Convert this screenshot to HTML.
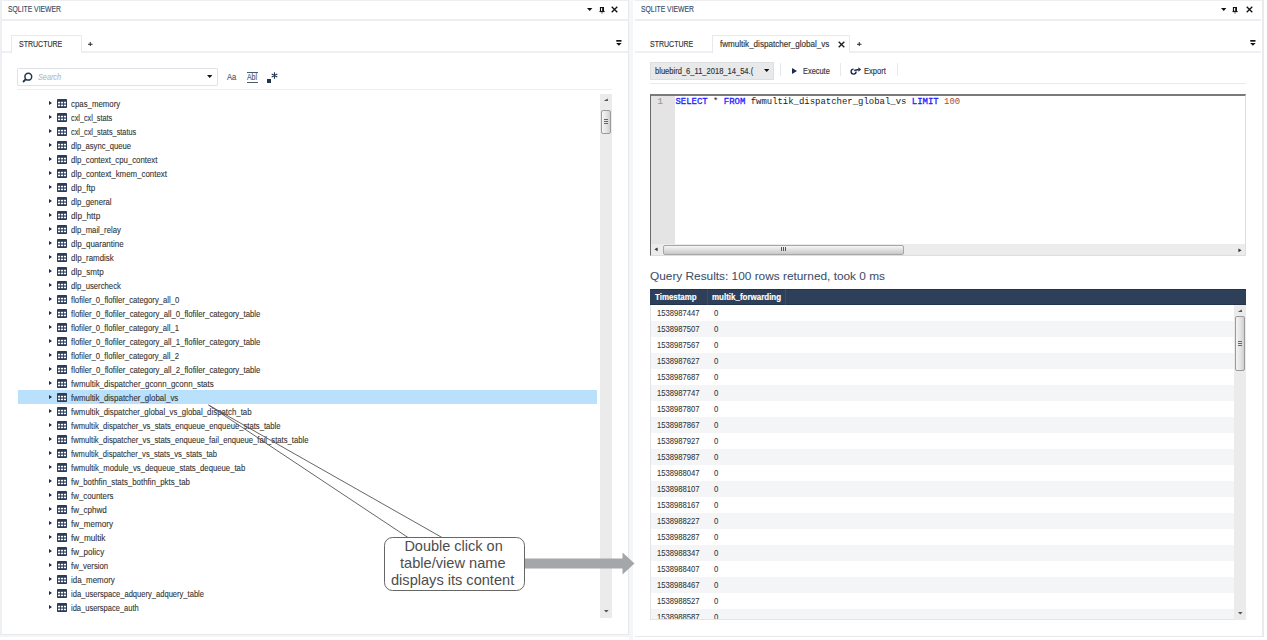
<!DOCTYPE html>
<html><head><meta charset="utf-8"><style>
*{margin:0;padding:0;box-sizing:border-box}
html,body{width:1267px;height:640px;overflow:hidden;background:#fff;font-family:"Liberation Sans",sans-serif;position:relative}
.abs{position:absolute}
.t{position:absolute;white-space:pre;transform-origin:0 50%;-webkit-text-stroke-width:0.15px}
#lp{position:absolute;left:0;top:0;width:629px;height:635px;border:1px solid #e6e9ec;border-left:2px solid #edf0f2;border-top-color:#eceef0}
#split{position:absolute;left:629px;top:0;width:4px;height:640px;background:#f5f6f7}
#bstrip{position:absolute;left:0;top:635px;width:633px;height:2px;background:#f5f5f6}
#rp{position:absolute;left:635px;top:0;width:629px;height:637px;border-top:1px solid #eceef0;border-right:2px solid #e8eaed;border-bottom:1px solid #e6e9ec}
.tabline{position:absolute;height:2px;top:51px;background:#edeff2}
.tab{position:absolute;top:35px;height:18px;border:1px solid #e6e9ed;border-bottom:none;background:#fff}
.tr{position:absolute;left:18px;width:579px;height:14px}
.tr.sel{background:#bae1fb}
.tri{position:absolute;left:30.5px;top:4.6px;width:0;height:0;border-left:3.1px solid #1b2a4a;border-top:2.8px solid transparent;border-bottom:2.8px solid transparent}
.ti{position:absolute;left:39px;top:3px}
.rr{position:absolute;left:651px;width:583px;height:16px;background:#fff}
.rr.odd{background:#f4f5f7}
.dn{position:absolute;width:0;height:0;border-top:3px solid #111;border-left:2.6px solid transparent;border-right:2.6px solid transparent}
</style></head><body>
<div id="lp"></div>
<div id="split"></div>
<div id="bstrip"></div>
<div id="rp"></div>

<!-- LEFT PANEL -->
<div class="abs" style="left:2px;top:19px;width:626px;height:2px;background:#eceef1"></div>
<div class="t" style="left:7.80px;top:4.78px;font:normal normal 9.2px/1 'Liberation Sans';color:#3c4c66;transform:scaleX(0.7414);">SQLITE VIEWER</div>
<svg class="abs" style="left:587.0px;top:7.8px" width="6" height="4" viewBox="0 0 6 4"><path d="M0 0H5.4L2.7 3.1Z" fill="#111"/></svg>
<svg class="abs" style="left:599px;top:6px" width="7" height="9" viewBox="0 0 7 9"><rect x="0.9" y="1" width="4.1" height="4.6" fill="#111"/><rect x="2" y="2.1" width="1.2" height="2.7" fill="#fff"/><rect x="0.5" y="5.1" width="5.2" height="1" fill="#111"/><rect x="2.3" y="6" width="1.4" height="1.7" fill="#888"/></svg>
<svg class="abs" style="left:611.3px;top:6.1px" width="7" height="7" viewBox="0 0 7 7"><path d="M0.7 0.7L6.3 6.3M6.3 0.7L0.7 6.3" stroke="#111" stroke-width="1.3"/></svg>
<div class="tabline" style="left:2px;width:10px"></div>
<div class="tab" style="left:11px;width:71px"></div>
<div class="tabline" style="left:81px;width:547px"></div>
<div class="t" style="left:18.70px;top:39.89px;font:normal normal 8.6px/1 'Liberation Sans';color:#333;transform:scaleX(0.8151);">STRUCTURE</div>
<svg class="abs" style="left:88.35px;top:41.95px" width="4.5" height="4.5" viewBox="0 0 4.5 4.5"><path d="M2.25 0V4.5M0 2.25H4.5" stroke="#2a2a2a" stroke-width="1"/></svg>
<svg class="abs" style="left:615.5px;top:40px" width="6" height="6" viewBox="0 0 6 6"><rect x="0.25" y="0" width="5.25" height="1.7" fill="#1a1a1a"/><path d="M0.1 2.9H5.6L2.85 5.8Z" fill="#111"/></svg>
<div class="abs" style="left:17px;top:68px;width:201px;height:18px;border:1px solid #dfe2e6;border-radius:1px;background:#fff"></div>
<svg class="abs" style="left:22px;top:72px" width="11" height="11" viewBox="0 0 11 11"><circle cx="6.3" cy="4.7" r="3.4" fill="none" stroke="#23344f" stroke-width="1.5"/><path d="M4 7L1 10" stroke="#23344f" stroke-width="1.8"/></svg>
<div class="t" style="left:38.20px;top:73.19px;font:italic normal 8.6px/1 'Liberation Sans';color:#b9bdc3;transform:scaleX(0.8445);">Search</div>
<svg class="abs" style="left:207.0px;top:75.0px" width="6" height="4" viewBox="0 0 6 4"><path d="M0 0H5.4L2.7 3.1Z" fill="#111"/></svg>
<div class="t" style="left:227.40px;top:73.19px;font:normal normal 8.6px/1 'Liberation Sans';color:#4a5a70;transform:scaleX(0.8844);">Aa</div>
<div class="abs" style="left:247px;top:72px;width:11px;height:1px;background:#4a5a70"></div>
<div class="t" style="left:246.90px;top:73.19px;font:normal normal 8.6px/1 'Liberation Sans';color:#4a5a70;transform:scaleX(0.8050);">Abl</div>
<div class="abs" style="left:247px;top:82px;width:11px;height:1px;background:#4a5a70"></div>
<div class="abs" style="left:267px;top:79px;width:4px;height:4px;background:#23344f"></div>
<svg class="abs" style="left:271px;top:71.5px" width="7" height="7" viewBox="0 0 7 7"><path d="M3.5 0.3V6.7M0.7 1.9L6.3 5.1M0.7 5.1L6.3 1.9" stroke="#23344f" stroke-width="1.1"/></svg>
<div class="abs" style="left:17px;top:89px;width:595px;height:1px;background:#eceef0"></div>
<div class="tr" style="top:96px"><i class="tri"></i><svg class="ti" width="10" height="9" viewBox="0 0 10 9"><rect x="0" y="0" width="10" height="9" rx="0.8" fill="#2b3c5a"/><g fill="#fff"><rect x="1" y="2.8" width="2.1" height="1.4"/><rect x="3.95" y="2.8" width="2.1" height="1.4"/><rect x="6.9" y="2.8" width="2.1" height="1.4"/><rect x="1" y="5.9" width="2.1" height="1.3"/><rect x="3.95" y="5.9" width="2.1" height="1.3"/><rect x="6.9" y="5.9" width="2.1" height="1.3"/></g><g fill="#fff" opacity="0.3"><rect x="1" y="4.2" width="2.1" height="1.7"/><rect x="3.95" y="4.2" width="2.1" height="1.7"/><rect x="6.9" y="4.2" width="2.1" height="1.7"/></g></svg></div><div class="t" style="left:70.60px;top:99.59px;font:normal normal 8.6px/1 'Liberation Sans',sans-serif;color:#333;transform:scaleX(0.9116);-webkit-text-stroke-width:0.1px">cpas_memory</div><div class="tr" style="top:110px"><i class="tri"></i><svg class="ti" width="10" height="9" viewBox="0 0 10 9"><rect x="0" y="0" width="10" height="9" rx="0.8" fill="#2b3c5a"/><g fill="#fff"><rect x="1" y="2.8" width="2.1" height="1.4"/><rect x="3.95" y="2.8" width="2.1" height="1.4"/><rect x="6.9" y="2.8" width="2.1" height="1.4"/><rect x="1" y="5.9" width="2.1" height="1.3"/><rect x="3.95" y="5.9" width="2.1" height="1.3"/><rect x="6.9" y="5.9" width="2.1" height="1.3"/></g><g fill="#fff" opacity="0.3"><rect x="1" y="4.2" width="2.1" height="1.7"/><rect x="3.95" y="4.2" width="2.1" height="1.7"/><rect x="6.9" y="4.2" width="2.1" height="1.7"/></g></svg></div><div class="t" style="left:70.60px;top:113.59px;font:normal normal 8.6px/1 'Liberation Sans',sans-serif;color:#333;transform:scaleX(0.8457);-webkit-text-stroke-width:0.1px">cxl_cxl_stats</div><div class="tr" style="top:124px"><i class="tri"></i><svg class="ti" width="10" height="9" viewBox="0 0 10 9"><rect x="0" y="0" width="10" height="9" rx="0.8" fill="#2b3c5a"/><g fill="#fff"><rect x="1" y="2.8" width="2.1" height="1.4"/><rect x="3.95" y="2.8" width="2.1" height="1.4"/><rect x="6.9" y="2.8" width="2.1" height="1.4"/><rect x="1" y="5.9" width="2.1" height="1.3"/><rect x="3.95" y="5.9" width="2.1" height="1.3"/><rect x="6.9" y="5.9" width="2.1" height="1.3"/></g><g fill="#fff" opacity="0.3"><rect x="1" y="4.2" width="2.1" height="1.7"/><rect x="3.95" y="4.2" width="2.1" height="1.7"/><rect x="6.9" y="4.2" width="2.1" height="1.7"/></g></svg></div><div class="t" style="left:70.60px;top:127.59px;font:normal normal 8.6px/1 'Liberation Sans',sans-serif;color:#333;transform:scaleX(0.8532);-webkit-text-stroke-width:0.1px">cxl_cxl_stats_status</div><div class="tr" style="top:138px"><i class="tri"></i><svg class="ti" width="10" height="9" viewBox="0 0 10 9"><rect x="0" y="0" width="10" height="9" rx="0.8" fill="#2b3c5a"/><g fill="#fff"><rect x="1" y="2.8" width="2.1" height="1.4"/><rect x="3.95" y="2.8" width="2.1" height="1.4"/><rect x="6.9" y="2.8" width="2.1" height="1.4"/><rect x="1" y="5.9" width="2.1" height="1.3"/><rect x="3.95" y="5.9" width="2.1" height="1.3"/><rect x="6.9" y="5.9" width="2.1" height="1.3"/></g><g fill="#fff" opacity="0.3"><rect x="1" y="4.2" width="2.1" height="1.7"/><rect x="3.95" y="4.2" width="2.1" height="1.7"/><rect x="6.9" y="4.2" width="2.1" height="1.7"/></g></svg></div><div class="t" style="left:70.60px;top:141.59px;font:normal normal 8.6px/1 'Liberation Sans',sans-serif;color:#333;transform:scaleX(0.8920);-webkit-text-stroke-width:0.1px">dlp_async_queue</div><div class="tr" style="top:152px"><i class="tri"></i><svg class="ti" width="10" height="9" viewBox="0 0 10 9"><rect x="0" y="0" width="10" height="9" rx="0.8" fill="#2b3c5a"/><g fill="#fff"><rect x="1" y="2.8" width="2.1" height="1.4"/><rect x="3.95" y="2.8" width="2.1" height="1.4"/><rect x="6.9" y="2.8" width="2.1" height="1.4"/><rect x="1" y="5.9" width="2.1" height="1.3"/><rect x="3.95" y="5.9" width="2.1" height="1.3"/><rect x="6.9" y="5.9" width="2.1" height="1.3"/></g><g fill="#fff" opacity="0.3"><rect x="1" y="4.2" width="2.1" height="1.7"/><rect x="3.95" y="4.2" width="2.1" height="1.7"/><rect x="6.9" y="4.2" width="2.1" height="1.7"/></g></svg></div><div class="t" style="left:70.60px;top:155.59px;font:normal normal 8.6px/1 'Liberation Sans',sans-serif;color:#333;transform:scaleX(0.9077);-webkit-text-stroke-width:0.1px">dlp_context_cpu_context</div><div class="tr" style="top:166px"><i class="tri"></i><svg class="ti" width="10" height="9" viewBox="0 0 10 9"><rect x="0" y="0" width="10" height="9" rx="0.8" fill="#2b3c5a"/><g fill="#fff"><rect x="1" y="2.8" width="2.1" height="1.4"/><rect x="3.95" y="2.8" width="2.1" height="1.4"/><rect x="6.9" y="2.8" width="2.1" height="1.4"/><rect x="1" y="5.9" width="2.1" height="1.3"/><rect x="3.95" y="5.9" width="2.1" height="1.3"/><rect x="6.9" y="5.9" width="2.1" height="1.3"/></g><g fill="#fff" opacity="0.3"><rect x="1" y="4.2" width="2.1" height="1.7"/><rect x="3.95" y="4.2" width="2.1" height="1.7"/><rect x="6.9" y="4.2" width="2.1" height="1.7"/></g></svg></div><div class="t" style="left:70.60px;top:169.59px;font:normal normal 8.6px/1 'Liberation Sans',sans-serif;color:#333;transform:scaleX(0.9166);-webkit-text-stroke-width:0.1px">dlp_context_kmem_context</div><div class="tr" style="top:180px"><i class="tri"></i><svg class="ti" width="10" height="9" viewBox="0 0 10 9"><rect x="0" y="0" width="10" height="9" rx="0.8" fill="#2b3c5a"/><g fill="#fff"><rect x="1" y="2.8" width="2.1" height="1.4"/><rect x="3.95" y="2.8" width="2.1" height="1.4"/><rect x="6.9" y="2.8" width="2.1" height="1.4"/><rect x="1" y="5.9" width="2.1" height="1.3"/><rect x="3.95" y="5.9" width="2.1" height="1.3"/><rect x="6.9" y="5.9" width="2.1" height="1.3"/></g><g fill="#fff" opacity="0.3"><rect x="1" y="4.2" width="2.1" height="1.7"/><rect x="3.95" y="4.2" width="2.1" height="1.7"/><rect x="6.9" y="4.2" width="2.1" height="1.7"/></g></svg></div><div class="t" style="left:70.60px;top:183.59px;font:normal normal 8.6px/1 'Liberation Sans',sans-serif;color:#333;transform:scaleX(0.9375);-webkit-text-stroke-width:0.1px">dlp_ftp</div><div class="tr" style="top:194px"><i class="tri"></i><svg class="ti" width="10" height="9" viewBox="0 0 10 9"><rect x="0" y="0" width="10" height="9" rx="0.8" fill="#2b3c5a"/><g fill="#fff"><rect x="1" y="2.8" width="2.1" height="1.4"/><rect x="3.95" y="2.8" width="2.1" height="1.4"/><rect x="6.9" y="2.8" width="2.1" height="1.4"/><rect x="1" y="5.9" width="2.1" height="1.3"/><rect x="3.95" y="5.9" width="2.1" height="1.3"/><rect x="6.9" y="5.9" width="2.1" height="1.3"/></g><g fill="#fff" opacity="0.3"><rect x="1" y="4.2" width="2.1" height="1.7"/><rect x="3.95" y="4.2" width="2.1" height="1.7"/><rect x="6.9" y="4.2" width="2.1" height="1.7"/></g></svg></div><div class="t" style="left:70.60px;top:197.59px;font:normal normal 8.6px/1 'Liberation Sans',sans-serif;color:#333;transform:scaleX(0.9038);-webkit-text-stroke-width:0.1px">dlp_general</div><div class="tr" style="top:208px"><i class="tri"></i><svg class="ti" width="10" height="9" viewBox="0 0 10 9"><rect x="0" y="0" width="10" height="9" rx="0.8" fill="#2b3c5a"/><g fill="#fff"><rect x="1" y="2.8" width="2.1" height="1.4"/><rect x="3.95" y="2.8" width="2.1" height="1.4"/><rect x="6.9" y="2.8" width="2.1" height="1.4"/><rect x="1" y="5.9" width="2.1" height="1.3"/><rect x="3.95" y="5.9" width="2.1" height="1.3"/><rect x="6.9" y="5.9" width="2.1" height="1.3"/></g><g fill="#fff" opacity="0.3"><rect x="1" y="4.2" width="2.1" height="1.7"/><rect x="3.95" y="4.2" width="2.1" height="1.7"/><rect x="6.9" y="4.2" width="2.1" height="1.7"/></g></svg></div><div class="t" style="left:70.60px;top:211.59px;font:normal normal 8.6px/1 'Liberation Sans',sans-serif;color:#333;transform:scaleX(0.9544);-webkit-text-stroke-width:0.1px">dlp_http</div><div class="tr" style="top:222px"><i class="tri"></i><svg class="ti" width="10" height="9" viewBox="0 0 10 9"><rect x="0" y="0" width="10" height="9" rx="0.8" fill="#2b3c5a"/><g fill="#fff"><rect x="1" y="2.8" width="2.1" height="1.4"/><rect x="3.95" y="2.8" width="2.1" height="1.4"/><rect x="6.9" y="2.8" width="2.1" height="1.4"/><rect x="1" y="5.9" width="2.1" height="1.3"/><rect x="3.95" y="5.9" width="2.1" height="1.3"/><rect x="6.9" y="5.9" width="2.1" height="1.3"/></g><g fill="#fff" opacity="0.3"><rect x="1" y="4.2" width="2.1" height="1.7"/><rect x="3.95" y="4.2" width="2.1" height="1.7"/><rect x="6.9" y="4.2" width="2.1" height="1.7"/></g></svg></div><div class="t" style="left:70.60px;top:225.59px;font:normal normal 8.6px/1 'Liberation Sans',sans-serif;color:#333;transform:scaleX(0.9004);-webkit-text-stroke-width:0.1px">dlp_mail_relay</div><div class="tr" style="top:236px"><i class="tri"></i><svg class="ti" width="10" height="9" viewBox="0 0 10 9"><rect x="0" y="0" width="10" height="9" rx="0.8" fill="#2b3c5a"/><g fill="#fff"><rect x="1" y="2.8" width="2.1" height="1.4"/><rect x="3.95" y="2.8" width="2.1" height="1.4"/><rect x="6.9" y="2.8" width="2.1" height="1.4"/><rect x="1" y="5.9" width="2.1" height="1.3"/><rect x="3.95" y="5.9" width="2.1" height="1.3"/><rect x="6.9" y="5.9" width="2.1" height="1.3"/></g><g fill="#fff" opacity="0.3"><rect x="1" y="4.2" width="2.1" height="1.7"/><rect x="3.95" y="4.2" width="2.1" height="1.7"/><rect x="6.9" y="4.2" width="2.1" height="1.7"/></g></svg></div><div class="t" style="left:70.60px;top:239.59px;font:normal normal 8.6px/1 'Liberation Sans',sans-serif;color:#333;transform:scaleX(0.9248);-webkit-text-stroke-width:0.1px">dlp_quarantine</div><div class="tr" style="top:250px"><i class="tri"></i><svg class="ti" width="10" height="9" viewBox="0 0 10 9"><rect x="0" y="0" width="10" height="9" rx="0.8" fill="#2b3c5a"/><g fill="#fff"><rect x="1" y="2.8" width="2.1" height="1.4"/><rect x="3.95" y="2.8" width="2.1" height="1.4"/><rect x="6.9" y="2.8" width="2.1" height="1.4"/><rect x="1" y="5.9" width="2.1" height="1.3"/><rect x="3.95" y="5.9" width="2.1" height="1.3"/><rect x="6.9" y="5.9" width="2.1" height="1.3"/></g><g fill="#fff" opacity="0.3"><rect x="1" y="4.2" width="2.1" height="1.7"/><rect x="3.95" y="4.2" width="2.1" height="1.7"/><rect x="6.9" y="4.2" width="2.1" height="1.7"/></g></svg></div><div class="t" style="left:70.60px;top:253.59px;font:normal normal 8.6px/1 'Liberation Sans',sans-serif;color:#333;transform:scaleX(0.9235);-webkit-text-stroke-width:0.1px">dlp_ramdisk</div><div class="tr" style="top:264px"><i class="tri"></i><svg class="ti" width="10" height="9" viewBox="0 0 10 9"><rect x="0" y="0" width="10" height="9" rx="0.8" fill="#2b3c5a"/><g fill="#fff"><rect x="1" y="2.8" width="2.1" height="1.4"/><rect x="3.95" y="2.8" width="2.1" height="1.4"/><rect x="6.9" y="2.8" width="2.1" height="1.4"/><rect x="1" y="5.9" width="2.1" height="1.3"/><rect x="3.95" y="5.9" width="2.1" height="1.3"/><rect x="6.9" y="5.9" width="2.1" height="1.3"/></g><g fill="#fff" opacity="0.3"><rect x="1" y="4.2" width="2.1" height="1.7"/><rect x="3.95" y="4.2" width="2.1" height="1.7"/><rect x="6.9" y="4.2" width="2.1" height="1.7"/></g></svg></div><div class="t" style="left:70.60px;top:267.59px;font:normal normal 8.6px/1 'Liberation Sans',sans-serif;color:#333;transform:scaleX(0.9376);-webkit-text-stroke-width:0.1px">dlp_smtp</div><div class="tr" style="top:278px"><i class="tri"></i><svg class="ti" width="10" height="9" viewBox="0 0 10 9"><rect x="0" y="0" width="10" height="9" rx="0.8" fill="#2b3c5a"/><g fill="#fff"><rect x="1" y="2.8" width="2.1" height="1.4"/><rect x="3.95" y="2.8" width="2.1" height="1.4"/><rect x="6.9" y="2.8" width="2.1" height="1.4"/><rect x="1" y="5.9" width="2.1" height="1.3"/><rect x="3.95" y="5.9" width="2.1" height="1.3"/><rect x="6.9" y="5.9" width="2.1" height="1.3"/></g><g fill="#fff" opacity="0.3"><rect x="1" y="4.2" width="2.1" height="1.7"/><rect x="3.95" y="4.2" width="2.1" height="1.7"/><rect x="6.9" y="4.2" width="2.1" height="1.7"/></g></svg></div><div class="t" style="left:70.60px;top:281.59px;font:normal normal 8.6px/1 'Liberation Sans',sans-serif;color:#333;transform:scaleX(0.9004);-webkit-text-stroke-width:0.1px">dlp_usercheck</div><div class="tr" style="top:292px"><i class="tri"></i><svg class="ti" width="10" height="9" viewBox="0 0 10 9"><rect x="0" y="0" width="10" height="9" rx="0.8" fill="#2b3c5a"/><g fill="#fff"><rect x="1" y="2.8" width="2.1" height="1.4"/><rect x="3.95" y="2.8" width="2.1" height="1.4"/><rect x="6.9" y="2.8" width="2.1" height="1.4"/><rect x="1" y="5.9" width="2.1" height="1.3"/><rect x="3.95" y="5.9" width="2.1" height="1.3"/><rect x="6.9" y="5.9" width="2.1" height="1.3"/></g><g fill="#fff" opacity="0.3"><rect x="1" y="4.2" width="2.1" height="1.7"/><rect x="3.95" y="4.2" width="2.1" height="1.7"/><rect x="6.9" y="4.2" width="2.1" height="1.7"/></g></svg></div><div class="t" style="left:70.60px;top:295.59px;font:normal normal 8.6px/1 'Liberation Sans',sans-serif;color:#333;transform:scaleX(0.8960);-webkit-text-stroke-width:0.1px">flofiler_0_flofiler_category_all_0</div><div class="tr" style="top:306px"><i class="tri"></i><svg class="ti" width="10" height="9" viewBox="0 0 10 9"><rect x="0" y="0" width="10" height="9" rx="0.8" fill="#2b3c5a"/><g fill="#fff"><rect x="1" y="2.8" width="2.1" height="1.4"/><rect x="3.95" y="2.8" width="2.1" height="1.4"/><rect x="6.9" y="2.8" width="2.1" height="1.4"/><rect x="1" y="5.9" width="2.1" height="1.3"/><rect x="3.95" y="5.9" width="2.1" height="1.3"/><rect x="6.9" y="5.9" width="2.1" height="1.3"/></g><g fill="#fff" opacity="0.3"><rect x="1" y="4.2" width="2.1" height="1.7"/><rect x="3.95" y="4.2" width="2.1" height="1.7"/><rect x="6.9" y="4.2" width="2.1" height="1.7"/></g></svg></div><div class="t" style="left:70.60px;top:309.59px;font:normal normal 8.6px/1 'Liberation Sans',sans-serif;color:#333;transform:scaleX(0.9026);-webkit-text-stroke-width:0.1px">flofiler_0_flofiler_category_all_0_flofiler_category_table</div><div class="tr" style="top:320px"><i class="tri"></i><svg class="ti" width="10" height="9" viewBox="0 0 10 9"><rect x="0" y="0" width="10" height="9" rx="0.8" fill="#2b3c5a"/><g fill="#fff"><rect x="1" y="2.8" width="2.1" height="1.4"/><rect x="3.95" y="2.8" width="2.1" height="1.4"/><rect x="6.9" y="2.8" width="2.1" height="1.4"/><rect x="1" y="5.9" width="2.1" height="1.3"/><rect x="3.95" y="5.9" width="2.1" height="1.3"/><rect x="6.9" y="5.9" width="2.1" height="1.3"/></g><g fill="#fff" opacity="0.3"><rect x="1" y="4.2" width="2.1" height="1.7"/><rect x="3.95" y="4.2" width="2.1" height="1.7"/><rect x="6.9" y="4.2" width="2.1" height="1.7"/></g></svg></div><div class="t" style="left:70.60px;top:323.59px;font:normal normal 8.6px/1 'Liberation Sans',sans-serif;color:#333;transform:scaleX(0.8943);-webkit-text-stroke-width:0.1px">flofiler_0_flofiler_category_all_1</div><div class="tr" style="top:334px"><i class="tri"></i><svg class="ti" width="10" height="9" viewBox="0 0 10 9"><rect x="0" y="0" width="10" height="9" rx="0.8" fill="#2b3c5a"/><g fill="#fff"><rect x="1" y="2.8" width="2.1" height="1.4"/><rect x="3.95" y="2.8" width="2.1" height="1.4"/><rect x="6.9" y="2.8" width="2.1" height="1.4"/><rect x="1" y="5.9" width="2.1" height="1.3"/><rect x="3.95" y="5.9" width="2.1" height="1.3"/><rect x="6.9" y="5.9" width="2.1" height="1.3"/></g><g fill="#fff" opacity="0.3"><rect x="1" y="4.2" width="2.1" height="1.7"/><rect x="3.95" y="4.2" width="2.1" height="1.7"/><rect x="6.9" y="4.2" width="2.1" height="1.7"/></g></svg></div><div class="t" style="left:70.60px;top:337.59px;font:normal normal 8.6px/1 'Liberation Sans',sans-serif;color:#333;transform:scaleX(0.9030);-webkit-text-stroke-width:0.1px">flofiler_0_flofiler_category_all_1_flofiler_category_table</div><div class="tr" style="top:348px"><i class="tri"></i><svg class="ti" width="10" height="9" viewBox="0 0 10 9"><rect x="0" y="0" width="10" height="9" rx="0.8" fill="#2b3c5a"/><g fill="#fff"><rect x="1" y="2.8" width="2.1" height="1.4"/><rect x="3.95" y="2.8" width="2.1" height="1.4"/><rect x="6.9" y="2.8" width="2.1" height="1.4"/><rect x="1" y="5.9" width="2.1" height="1.3"/><rect x="3.95" y="5.9" width="2.1" height="1.3"/><rect x="6.9" y="5.9" width="2.1" height="1.3"/></g><g fill="#fff" opacity="0.3"><rect x="1" y="4.2" width="2.1" height="1.7"/><rect x="3.95" y="4.2" width="2.1" height="1.7"/><rect x="6.9" y="4.2" width="2.1" height="1.7"/></g></svg></div><div class="t" style="left:70.60px;top:351.59px;font:normal normal 8.6px/1 'Liberation Sans',sans-serif;color:#333;transform:scaleX(0.8943);-webkit-text-stroke-width:0.1px">flofiler_0_flofiler_category_all_2</div><div class="tr" style="top:362px"><i class="tri"></i><svg class="ti" width="10" height="9" viewBox="0 0 10 9"><rect x="0" y="0" width="10" height="9" rx="0.8" fill="#2b3c5a"/><g fill="#fff"><rect x="1" y="2.8" width="2.1" height="1.4"/><rect x="3.95" y="2.8" width="2.1" height="1.4"/><rect x="6.9" y="2.8" width="2.1" height="1.4"/><rect x="1" y="5.9" width="2.1" height="1.3"/><rect x="3.95" y="5.9" width="2.1" height="1.3"/><rect x="6.9" y="5.9" width="2.1" height="1.3"/></g><g fill="#fff" opacity="0.3"><rect x="1" y="4.2" width="2.1" height="1.7"/><rect x="3.95" y="4.2" width="2.1" height="1.7"/><rect x="6.9" y="4.2" width="2.1" height="1.7"/></g></svg></div><div class="t" style="left:70.60px;top:365.59px;font:normal normal 8.6px/1 'Liberation Sans',sans-serif;color:#333;transform:scaleX(0.9030);-webkit-text-stroke-width:0.1px">flofiler_0_flofiler_category_all_2_flofiler_category_table</div><div class="tr" style="top:376px"><i class="tri"></i><svg class="ti" width="10" height="9" viewBox="0 0 10 9"><rect x="0" y="0" width="10" height="9" rx="0.8" fill="#2b3c5a"/><g fill="#fff"><rect x="1" y="2.8" width="2.1" height="1.4"/><rect x="3.95" y="2.8" width="2.1" height="1.4"/><rect x="6.9" y="2.8" width="2.1" height="1.4"/><rect x="1" y="5.9" width="2.1" height="1.3"/><rect x="3.95" y="5.9" width="2.1" height="1.3"/><rect x="6.9" y="5.9" width="2.1" height="1.3"/></g><g fill="#fff" opacity="0.3"><rect x="1" y="4.2" width="2.1" height="1.7"/><rect x="3.95" y="4.2" width="2.1" height="1.7"/><rect x="6.9" y="4.2" width="2.1" height="1.7"/></g></svg></div><div class="t" style="left:70.60px;top:379.59px;font:normal normal 8.6px/1 'Liberation Sans',sans-serif;color:#333;transform:scaleX(0.9219);-webkit-text-stroke-width:0.1px">fwmultik_dispatcher_gconn_gconn_stats</div><div class="tr sel" style="top:390px"><i class="tri"></i><svg class="ti" width="10" height="9" viewBox="0 0 10 9"><rect x="0" y="0" width="10" height="9" rx="0.8" fill="#2b3c5a"/><g fill="#fff"><rect x="1" y="2.8" width="2.1" height="1.4"/><rect x="3.95" y="2.8" width="2.1" height="1.4"/><rect x="6.9" y="2.8" width="2.1" height="1.4"/><rect x="1" y="5.9" width="2.1" height="1.3"/><rect x="3.95" y="5.9" width="2.1" height="1.3"/><rect x="6.9" y="5.9" width="2.1" height="1.3"/></g><g fill="#fff" opacity="0.3"><rect x="1" y="4.2" width="2.1" height="1.7"/><rect x="3.95" y="4.2" width="2.1" height="1.7"/><rect x="6.9" y="4.2" width="2.1" height="1.7"/></g></svg></div><div class="t" style="left:70.60px;top:393.59px;font:normal normal 8.6px/1 'Liberation Sans',sans-serif;color:#333;transform:scaleX(0.9205);-webkit-text-stroke-width:0.1px">fwmultik_dispatcher_global_vs</div><div class="tr" style="top:404px"><i class="tri"></i><svg class="ti" width="10" height="9" viewBox="0 0 10 9"><rect x="0" y="0" width="10" height="9" rx="0.8" fill="#2b3c5a"/><g fill="#fff"><rect x="1" y="2.8" width="2.1" height="1.4"/><rect x="3.95" y="2.8" width="2.1" height="1.4"/><rect x="6.9" y="2.8" width="2.1" height="1.4"/><rect x="1" y="5.9" width="2.1" height="1.3"/><rect x="3.95" y="5.9" width="2.1" height="1.3"/><rect x="6.9" y="5.9" width="2.1" height="1.3"/></g><g fill="#fff" opacity="0.3"><rect x="1" y="4.2" width="2.1" height="1.7"/><rect x="3.95" y="4.2" width="2.1" height="1.7"/><rect x="6.9" y="4.2" width="2.1" height="1.7"/></g></svg></div><div class="t" style="left:70.60px;top:407.59px;font:normal normal 8.6px/1 'Liberation Sans',sans-serif;color:#333;transform:scaleX(0.9131);-webkit-text-stroke-width:0.1px">fwmultik_dispatcher_global_vs_global_dispatch_tab</div><div class="tr" style="top:418px"><i class="tri"></i><svg class="ti" width="10" height="9" viewBox="0 0 10 9"><rect x="0" y="0" width="10" height="9" rx="0.8" fill="#2b3c5a"/><g fill="#fff"><rect x="1" y="2.8" width="2.1" height="1.4"/><rect x="3.95" y="2.8" width="2.1" height="1.4"/><rect x="6.9" y="2.8" width="2.1" height="1.4"/><rect x="1" y="5.9" width="2.1" height="1.3"/><rect x="3.95" y="5.9" width="2.1" height="1.3"/><rect x="6.9" y="5.9" width="2.1" height="1.3"/></g><g fill="#fff" opacity="0.3"><rect x="1" y="4.2" width="2.1" height="1.7"/><rect x="3.95" y="4.2" width="2.1" height="1.7"/><rect x="6.9" y="4.2" width="2.1" height="1.7"/></g></svg></div><div class="t" style="left:70.60px;top:421.59px;font:normal normal 8.6px/1 'Liberation Sans',sans-serif;color:#333;transform:scaleX(0.8935);-webkit-text-stroke-width:0.1px">fwmultik_dispatcher_vs_stats_enqueue_enqueue_stats_table</div><div class="tr" style="top:432px"><i class="tri"></i><svg class="ti" width="10" height="9" viewBox="0 0 10 9"><rect x="0" y="0" width="10" height="9" rx="0.8" fill="#2b3c5a"/><g fill="#fff"><rect x="1" y="2.8" width="2.1" height="1.4"/><rect x="3.95" y="2.8" width="2.1" height="1.4"/><rect x="6.9" y="2.8" width="2.1" height="1.4"/><rect x="1" y="5.9" width="2.1" height="1.3"/><rect x="3.95" y="5.9" width="2.1" height="1.3"/><rect x="6.9" y="5.9" width="2.1" height="1.3"/></g><g fill="#fff" opacity="0.3"><rect x="1" y="4.2" width="2.1" height="1.7"/><rect x="3.95" y="4.2" width="2.1" height="1.7"/><rect x="6.9" y="4.2" width="2.1" height="1.7"/></g></svg></div><div class="t" style="left:70.60px;top:435.59px;font:normal normal 8.6px/1 'Liberation Sans',sans-serif;color:#333;transform:scaleX(0.8921);-webkit-text-stroke-width:0.1px">fwmultik_dispatcher_vs_stats_enqueue_fail_enqueue_fail_stats_table</div><div class="tr" style="top:446px"><i class="tri"></i><svg class="ti" width="10" height="9" viewBox="0 0 10 9"><rect x="0" y="0" width="10" height="9" rx="0.8" fill="#2b3c5a"/><g fill="#fff"><rect x="1" y="2.8" width="2.1" height="1.4"/><rect x="3.95" y="2.8" width="2.1" height="1.4"/><rect x="6.9" y="2.8" width="2.1" height="1.4"/><rect x="1" y="5.9" width="2.1" height="1.3"/><rect x="3.95" y="5.9" width="2.1" height="1.3"/><rect x="6.9" y="5.9" width="2.1" height="1.3"/></g><g fill="#fff" opacity="0.3"><rect x="1" y="4.2" width="2.1" height="1.7"/><rect x="3.95" y="4.2" width="2.1" height="1.7"/><rect x="6.9" y="4.2" width="2.1" height="1.7"/></g></svg></div><div class="t" style="left:70.60px;top:449.59px;font:normal normal 8.6px/1 'Liberation Sans',sans-serif;color:#333;transform:scaleX(0.8859);-webkit-text-stroke-width:0.1px">fwmultik_dispatcher_vs_stats_vs_stats_tab</div><div class="tr" style="top:460px"><i class="tri"></i><svg class="ti" width="10" height="9" viewBox="0 0 10 9"><rect x="0" y="0" width="10" height="9" rx="0.8" fill="#2b3c5a"/><g fill="#fff"><rect x="1" y="2.8" width="2.1" height="1.4"/><rect x="3.95" y="2.8" width="2.1" height="1.4"/><rect x="6.9" y="2.8" width="2.1" height="1.4"/><rect x="1" y="5.9" width="2.1" height="1.3"/><rect x="3.95" y="5.9" width="2.1" height="1.3"/><rect x="6.9" y="5.9" width="2.1" height="1.3"/></g><g fill="#fff" opacity="0.3"><rect x="1" y="4.2" width="2.1" height="1.7"/><rect x="3.95" y="4.2" width="2.1" height="1.7"/><rect x="6.9" y="4.2" width="2.1" height="1.7"/></g></svg></div><div class="t" style="left:70.60px;top:463.59px;font:normal normal 8.6px/1 'Liberation Sans',sans-serif;color:#333;transform:scaleX(0.9003);-webkit-text-stroke-width:0.1px">fwmultik_module_vs_dequeue_stats_dequeue_tab</div><div class="tr" style="top:474px"><i class="tri"></i><svg class="ti" width="10" height="9" viewBox="0 0 10 9"><rect x="0" y="0" width="10" height="9" rx="0.8" fill="#2b3c5a"/><g fill="#fff"><rect x="1" y="2.8" width="2.1" height="1.4"/><rect x="3.95" y="2.8" width="2.1" height="1.4"/><rect x="6.9" y="2.8" width="2.1" height="1.4"/><rect x="1" y="5.9" width="2.1" height="1.3"/><rect x="3.95" y="5.9" width="2.1" height="1.3"/><rect x="6.9" y="5.9" width="2.1" height="1.3"/></g><g fill="#fff" opacity="0.3"><rect x="1" y="4.2" width="2.1" height="1.7"/><rect x="3.95" y="4.2" width="2.1" height="1.7"/><rect x="6.9" y="4.2" width="2.1" height="1.7"/></g></svg></div><div class="t" style="left:70.60px;top:477.59px;font:normal normal 8.6px/1 'Liberation Sans',sans-serif;color:#333;transform:scaleX(0.9157);-webkit-text-stroke-width:0.1px">fw_bothfin_stats_bothfin_pkts_tab</div><div class="tr" style="top:488px"><i class="tri"></i><svg class="ti" width="10" height="9" viewBox="0 0 10 9"><rect x="0" y="0" width="10" height="9" rx="0.8" fill="#2b3c5a"/><g fill="#fff"><rect x="1" y="2.8" width="2.1" height="1.4"/><rect x="3.95" y="2.8" width="2.1" height="1.4"/><rect x="6.9" y="2.8" width="2.1" height="1.4"/><rect x="1" y="5.9" width="2.1" height="1.3"/><rect x="3.95" y="5.9" width="2.1" height="1.3"/><rect x="6.9" y="5.9" width="2.1" height="1.3"/></g><g fill="#fff" opacity="0.3"><rect x="1" y="4.2" width="2.1" height="1.7"/><rect x="3.95" y="4.2" width="2.1" height="1.7"/><rect x="6.9" y="4.2" width="2.1" height="1.7"/></g></svg></div><div class="t" style="left:70.60px;top:491.59px;font:normal normal 8.6px/1 'Liberation Sans',sans-serif;color:#333;transform:scaleX(0.9171);-webkit-text-stroke-width:0.1px">fw_counters</div><div class="tr" style="top:502px"><i class="tri"></i><svg class="ti" width="10" height="9" viewBox="0 0 10 9"><rect x="0" y="0" width="10" height="9" rx="0.8" fill="#2b3c5a"/><g fill="#fff"><rect x="1" y="2.8" width="2.1" height="1.4"/><rect x="3.95" y="2.8" width="2.1" height="1.4"/><rect x="6.9" y="2.8" width="2.1" height="1.4"/><rect x="1" y="5.9" width="2.1" height="1.3"/><rect x="3.95" y="5.9" width="2.1" height="1.3"/><rect x="6.9" y="5.9" width="2.1" height="1.3"/></g><g fill="#fff" opacity="0.3"><rect x="1" y="4.2" width="2.1" height="1.7"/><rect x="3.95" y="4.2" width="2.1" height="1.7"/><rect x="6.9" y="4.2" width="2.1" height="1.7"/></g></svg></div><div class="t" style="left:70.60px;top:505.59px;font:normal normal 8.6px/1 'Liberation Sans',sans-serif;color:#333;transform:scaleX(0.9367);-webkit-text-stroke-width:0.1px">fw_cphwd</div><div class="tr" style="top:516px"><i class="tri"></i><svg class="ti" width="10" height="9" viewBox="0 0 10 9"><rect x="0" y="0" width="10" height="9" rx="0.8" fill="#2b3c5a"/><g fill="#fff"><rect x="1" y="2.8" width="2.1" height="1.4"/><rect x="3.95" y="2.8" width="2.1" height="1.4"/><rect x="6.9" y="2.8" width="2.1" height="1.4"/><rect x="1" y="5.9" width="2.1" height="1.3"/><rect x="3.95" y="5.9" width="2.1" height="1.3"/><rect x="6.9" y="5.9" width="2.1" height="1.3"/></g><g fill="#fff" opacity="0.3"><rect x="1" y="4.2" width="2.1" height="1.7"/><rect x="3.95" y="4.2" width="2.1" height="1.7"/><rect x="6.9" y="4.2" width="2.1" height="1.7"/></g></svg></div><div class="t" style="left:70.60px;top:519.59px;font:normal normal 8.6px/1 'Liberation Sans',sans-serif;color:#333;transform:scaleX(0.9455);-webkit-text-stroke-width:0.1px">fw_memory</div><div class="tr" style="top:530px"><i class="tri"></i><svg class="ti" width="10" height="9" viewBox="0 0 10 9"><rect x="0" y="0" width="10" height="9" rx="0.8" fill="#2b3c5a"/><g fill="#fff"><rect x="1" y="2.8" width="2.1" height="1.4"/><rect x="3.95" y="2.8" width="2.1" height="1.4"/><rect x="6.9" y="2.8" width="2.1" height="1.4"/><rect x="1" y="5.9" width="2.1" height="1.3"/><rect x="3.95" y="5.9" width="2.1" height="1.3"/><rect x="6.9" y="5.9" width="2.1" height="1.3"/></g><g fill="#fff" opacity="0.3"><rect x="1" y="4.2" width="2.1" height="1.7"/><rect x="3.95" y="4.2" width="2.1" height="1.7"/><rect x="6.9" y="4.2" width="2.1" height="1.7"/></g></svg></div><div class="t" style="left:70.60px;top:533.59px;font:normal normal 8.6px/1 'Liberation Sans',sans-serif;color:#333;transform:scaleX(0.9629);-webkit-text-stroke-width:0.1px">fw_multik</div><div class="tr" style="top:544px"><i class="tri"></i><svg class="ti" width="10" height="9" viewBox="0 0 10 9"><rect x="0" y="0" width="10" height="9" rx="0.8" fill="#2b3c5a"/><g fill="#fff"><rect x="1" y="2.8" width="2.1" height="1.4"/><rect x="3.95" y="2.8" width="2.1" height="1.4"/><rect x="6.9" y="2.8" width="2.1" height="1.4"/><rect x="1" y="5.9" width="2.1" height="1.3"/><rect x="3.95" y="5.9" width="2.1" height="1.3"/><rect x="6.9" y="5.9" width="2.1" height="1.3"/></g><g fill="#fff" opacity="0.3"><rect x="1" y="4.2" width="2.1" height="1.7"/><rect x="3.95" y="4.2" width="2.1" height="1.7"/><rect x="6.9" y="4.2" width="2.1" height="1.7"/></g></svg></div><div class="t" style="left:70.60px;top:547.59px;font:normal normal 8.6px/1 'Liberation Sans',sans-serif;color:#333;transform:scaleX(0.9389);-webkit-text-stroke-width:0.1px">fw_policy</div><div class="tr" style="top:558px"><i class="tri"></i><svg class="ti" width="10" height="9" viewBox="0 0 10 9"><rect x="0" y="0" width="10" height="9" rx="0.8" fill="#2b3c5a"/><g fill="#fff"><rect x="1" y="2.8" width="2.1" height="1.4"/><rect x="3.95" y="2.8" width="2.1" height="1.4"/><rect x="6.9" y="2.8" width="2.1" height="1.4"/><rect x="1" y="5.9" width="2.1" height="1.3"/><rect x="3.95" y="5.9" width="2.1" height="1.3"/><rect x="6.9" y="5.9" width="2.1" height="1.3"/></g><g fill="#fff" opacity="0.3"><rect x="1" y="4.2" width="2.1" height="1.7"/><rect x="3.95" y="4.2" width="2.1" height="1.7"/><rect x="6.9" y="4.2" width="2.1" height="1.7"/></g></svg></div><div class="t" style="left:70.60px;top:561.59px;font:normal normal 8.6px/1 'Liberation Sans',sans-serif;color:#333;transform:scaleX(0.9056);-webkit-text-stroke-width:0.1px">fw_version</div><div class="tr" style="top:572px"><i class="tri"></i><svg class="ti" width="10" height="9" viewBox="0 0 10 9"><rect x="0" y="0" width="10" height="9" rx="0.8" fill="#2b3c5a"/><g fill="#fff"><rect x="1" y="2.8" width="2.1" height="1.4"/><rect x="3.95" y="2.8" width="2.1" height="1.4"/><rect x="6.9" y="2.8" width="2.1" height="1.4"/><rect x="1" y="5.9" width="2.1" height="1.3"/><rect x="3.95" y="5.9" width="2.1" height="1.3"/><rect x="6.9" y="5.9" width="2.1" height="1.3"/></g><g fill="#fff" opacity="0.3"><rect x="1" y="4.2" width="2.1" height="1.7"/><rect x="3.95" y="4.2" width="2.1" height="1.7"/><rect x="6.9" y="4.2" width="2.1" height="1.7"/></g></svg></div><div class="t" style="left:70.60px;top:575.59px;font:normal normal 8.6px/1 'Liberation Sans',sans-serif;color:#333;transform:scaleX(0.9261);-webkit-text-stroke-width:0.1px">ida_memory</div><div class="tr" style="top:586px"><i class="tri"></i><svg class="ti" width="10" height="9" viewBox="0 0 10 9"><rect x="0" y="0" width="10" height="9" rx="0.8" fill="#2b3c5a"/><g fill="#fff"><rect x="1" y="2.8" width="2.1" height="1.4"/><rect x="3.95" y="2.8" width="2.1" height="1.4"/><rect x="6.9" y="2.8" width="2.1" height="1.4"/><rect x="1" y="5.9" width="2.1" height="1.3"/><rect x="3.95" y="5.9" width="2.1" height="1.3"/><rect x="6.9" y="5.9" width="2.1" height="1.3"/></g><g fill="#fff" opacity="0.3"><rect x="1" y="4.2" width="2.1" height="1.7"/><rect x="3.95" y="4.2" width="2.1" height="1.7"/><rect x="6.9" y="4.2" width="2.1" height="1.7"/></g></svg></div><div class="t" style="left:70.60px;top:589.59px;font:normal normal 8.6px/1 'Liberation Sans',sans-serif;color:#333;transform:scaleX(0.8809);-webkit-text-stroke-width:0.1px">ida_userspace_adquery_adquery_table</div><div class="tr" style="top:600px"><i class="tri"></i><svg class="ti" width="10" height="9" viewBox="0 0 10 9"><rect x="0" y="0" width="10" height="9" rx="0.8" fill="#2b3c5a"/><g fill="#fff"><rect x="1" y="2.8" width="2.1" height="1.4"/><rect x="3.95" y="2.8" width="2.1" height="1.4"/><rect x="6.9" y="2.8" width="2.1" height="1.4"/><rect x="1" y="5.9" width="2.1" height="1.3"/><rect x="3.95" y="5.9" width="2.1" height="1.3"/><rect x="6.9" y="5.9" width="2.1" height="1.3"/></g><g fill="#fff" opacity="0.3"><rect x="1" y="4.2" width="2.1" height="1.7"/><rect x="3.95" y="4.2" width="2.1" height="1.7"/><rect x="6.9" y="4.2" width="2.1" height="1.7"/></g></svg></div><div class="t" style="left:70.60px;top:603.59px;font:normal normal 8.6px/1 'Liberation Sans',sans-serif;color:#333;transform:scaleX(0.8746);-webkit-text-stroke-width:0.1px">ida_userspace_auth</div><div class="rr" style="top:305px;height:16px"></div><div class="t" style="left:656.80px;top:309.26px;font:normal normal 8.4px/1 'Liberation Sans',sans-serif;color:#333;transform:scaleX(0.9146);-webkit-text-stroke-width:0.06px">1538987447</div><div class="t" style="left:713.70px;top:309.26px;font:normal normal 8.4px/1 'Liberation Sans',sans-serif;color:#333;transform:scaleX(0.9300);-webkit-text-stroke-width:0.06px">0</div><div class="rr odd" style="top:321px;height:16px"></div><div class="t" style="left:656.80px;top:325.26px;font:normal normal 8.4px/1 'Liberation Sans',sans-serif;color:#333;transform:scaleX(0.9146);-webkit-text-stroke-width:0.06px">1538987507</div><div class="t" style="left:713.70px;top:325.26px;font:normal normal 8.4px/1 'Liberation Sans',sans-serif;color:#333;transform:scaleX(0.9300);-webkit-text-stroke-width:0.06px">0</div><div class="rr" style="top:337px;height:16px"></div><div class="t" style="left:656.80px;top:341.26px;font:normal normal 8.4px/1 'Liberation Sans',sans-serif;color:#333;transform:scaleX(0.9146);-webkit-text-stroke-width:0.06px">1538987567</div><div class="t" style="left:713.70px;top:341.26px;font:normal normal 8.4px/1 'Liberation Sans',sans-serif;color:#333;transform:scaleX(0.9300);-webkit-text-stroke-width:0.06px">0</div><div class="rr odd" style="top:353px;height:16px"></div><div class="t" style="left:656.80px;top:357.26px;font:normal normal 8.4px/1 'Liberation Sans',sans-serif;color:#333;transform:scaleX(0.9146);-webkit-text-stroke-width:0.06px">1538987627</div><div class="t" style="left:713.70px;top:357.26px;font:normal normal 8.4px/1 'Liberation Sans',sans-serif;color:#333;transform:scaleX(0.9300);-webkit-text-stroke-width:0.06px">0</div><div class="rr" style="top:369px;height:16px"></div><div class="t" style="left:656.80px;top:373.26px;font:normal normal 8.4px/1 'Liberation Sans',sans-serif;color:#333;transform:scaleX(0.9146);-webkit-text-stroke-width:0.06px">1538987687</div><div class="t" style="left:713.70px;top:373.26px;font:normal normal 8.4px/1 'Liberation Sans',sans-serif;color:#333;transform:scaleX(0.9300);-webkit-text-stroke-width:0.06px">0</div><div class="rr odd" style="top:385px;height:16px"></div><div class="t" style="left:656.80px;top:389.26px;font:normal normal 8.4px/1 'Liberation Sans',sans-serif;color:#333;transform:scaleX(0.9146);-webkit-text-stroke-width:0.06px">1538987747</div><div class="t" style="left:713.70px;top:389.26px;font:normal normal 8.4px/1 'Liberation Sans',sans-serif;color:#333;transform:scaleX(0.9300);-webkit-text-stroke-width:0.06px">0</div><div class="rr" style="top:401px;height:16px"></div><div class="t" style="left:656.80px;top:405.26px;font:normal normal 8.4px/1 'Liberation Sans',sans-serif;color:#333;transform:scaleX(0.9146);-webkit-text-stroke-width:0.06px">1538987807</div><div class="t" style="left:713.70px;top:405.26px;font:normal normal 8.4px/1 'Liberation Sans',sans-serif;color:#333;transform:scaleX(0.9300);-webkit-text-stroke-width:0.06px">0</div><div class="rr odd" style="top:417px;height:16px"></div><div class="t" style="left:656.80px;top:421.26px;font:normal normal 8.4px/1 'Liberation Sans',sans-serif;color:#333;transform:scaleX(0.9146);-webkit-text-stroke-width:0.06px">1538987867</div><div class="t" style="left:713.70px;top:421.26px;font:normal normal 8.4px/1 'Liberation Sans',sans-serif;color:#333;transform:scaleX(0.9300);-webkit-text-stroke-width:0.06px">0</div><div class="rr" style="top:433px;height:16px"></div><div class="t" style="left:656.80px;top:437.26px;font:normal normal 8.4px/1 'Liberation Sans',sans-serif;color:#333;transform:scaleX(0.9146);-webkit-text-stroke-width:0.06px">1538987927</div><div class="t" style="left:713.70px;top:437.26px;font:normal normal 8.4px/1 'Liberation Sans',sans-serif;color:#333;transform:scaleX(0.9300);-webkit-text-stroke-width:0.06px">0</div><div class="rr odd" style="top:449px;height:16px"></div><div class="t" style="left:656.80px;top:453.26px;font:normal normal 8.4px/1 'Liberation Sans',sans-serif;color:#333;transform:scaleX(0.9146);-webkit-text-stroke-width:0.06px">1538987987</div><div class="t" style="left:713.70px;top:453.26px;font:normal normal 8.4px/1 'Liberation Sans',sans-serif;color:#333;transform:scaleX(0.9300);-webkit-text-stroke-width:0.06px">0</div><div class="rr" style="top:465px;height:16px"></div><div class="t" style="left:656.80px;top:469.26px;font:normal normal 8.4px/1 'Liberation Sans',sans-serif;color:#333;transform:scaleX(0.9146);-webkit-text-stroke-width:0.06px">1538988047</div><div class="t" style="left:713.70px;top:469.26px;font:normal normal 8.4px/1 'Liberation Sans',sans-serif;color:#333;transform:scaleX(0.9300);-webkit-text-stroke-width:0.06px">0</div><div class="rr odd" style="top:481px;height:16px"></div><div class="t" style="left:656.80px;top:485.26px;font:normal normal 8.4px/1 'Liberation Sans',sans-serif;color:#333;transform:scaleX(0.9146);-webkit-text-stroke-width:0.06px">1538988107</div><div class="t" style="left:713.70px;top:485.26px;font:normal normal 8.4px/1 'Liberation Sans',sans-serif;color:#333;transform:scaleX(0.9300);-webkit-text-stroke-width:0.06px">0</div><div class="rr" style="top:497px;height:16px"></div><div class="t" style="left:656.80px;top:501.26px;font:normal normal 8.4px/1 'Liberation Sans',sans-serif;color:#333;transform:scaleX(0.9146);-webkit-text-stroke-width:0.06px">1538988167</div><div class="t" style="left:713.70px;top:501.26px;font:normal normal 8.4px/1 'Liberation Sans',sans-serif;color:#333;transform:scaleX(0.9300);-webkit-text-stroke-width:0.06px">0</div><div class="rr odd" style="top:513px;height:16px"></div><div class="t" style="left:656.80px;top:517.26px;font:normal normal 8.4px/1 'Liberation Sans',sans-serif;color:#333;transform:scaleX(0.9146);-webkit-text-stroke-width:0.06px">1538988227</div><div class="t" style="left:713.70px;top:517.26px;font:normal normal 8.4px/1 'Liberation Sans',sans-serif;color:#333;transform:scaleX(0.9300);-webkit-text-stroke-width:0.06px">0</div><div class="rr" style="top:529px;height:16px"></div><div class="t" style="left:656.80px;top:533.26px;font:normal normal 8.4px/1 'Liberation Sans',sans-serif;color:#333;transform:scaleX(0.9146);-webkit-text-stroke-width:0.06px">1538988287</div><div class="t" style="left:713.70px;top:533.26px;font:normal normal 8.4px/1 'Liberation Sans',sans-serif;color:#333;transform:scaleX(0.9300);-webkit-text-stroke-width:0.06px">0</div><div class="rr odd" style="top:545px;height:16px"></div><div class="t" style="left:656.80px;top:549.26px;font:normal normal 8.4px/1 'Liberation Sans',sans-serif;color:#333;transform:scaleX(0.9146);-webkit-text-stroke-width:0.06px">1538988347</div><div class="t" style="left:713.70px;top:549.26px;font:normal normal 8.4px/1 'Liberation Sans',sans-serif;color:#333;transform:scaleX(0.9300);-webkit-text-stroke-width:0.06px">0</div><div class="rr" style="top:561px;height:16px"></div><div class="t" style="left:656.80px;top:565.26px;font:normal normal 8.4px/1 'Liberation Sans',sans-serif;color:#333;transform:scaleX(0.9146);-webkit-text-stroke-width:0.06px">1538988407</div><div class="t" style="left:713.70px;top:565.26px;font:normal normal 8.4px/1 'Liberation Sans',sans-serif;color:#333;transform:scaleX(0.9300);-webkit-text-stroke-width:0.06px">0</div><div class="rr odd" style="top:577px;height:16px"></div><div class="t" style="left:656.80px;top:581.26px;font:normal normal 8.4px/1 'Liberation Sans',sans-serif;color:#333;transform:scaleX(0.9146);-webkit-text-stroke-width:0.06px">1538988467</div><div class="t" style="left:713.70px;top:581.26px;font:normal normal 8.4px/1 'Liberation Sans',sans-serif;color:#333;transform:scaleX(0.9300);-webkit-text-stroke-width:0.06px">0</div><div class="rr" style="top:593px;height:16px"></div><div class="t" style="left:656.80px;top:597.26px;font:normal normal 8.4px/1 'Liberation Sans',sans-serif;color:#333;transform:scaleX(0.9146);-webkit-text-stroke-width:0.06px">1538988527</div><div class="t" style="left:713.70px;top:597.26px;font:normal normal 8.4px/1 'Liberation Sans',sans-serif;color:#333;transform:scaleX(0.9300);-webkit-text-stroke-width:0.06px">0</div><div class="rr odd" style="top:609px;height:10px"></div><div class="t" style="left:656.80px;top:613.26px;font:normal normal 8.4px/1 'Liberation Sans',sans-serif;color:#333;transform:scaleX(0.9146);-webkit-text-stroke-width:0.06px">1538988587</div><div class="t" style="left:713.70px;top:613.26px;font:normal normal 8.4px/1 'Liberation Sans',sans-serif;color:#333;transform:scaleX(0.9300);-webkit-text-stroke-width:0.06px">0</div>
<div class="abs" style="left:600px;top:94px;width:12px;height:524px;background:#ebebeb"></div>
<svg class="abs" style="left:603px;top:97.5px" width="6" height="4" viewBox="0 0 6 4"><path d="M0.8 3L4.6 0.6L5.2 3Z" fill="#555"/></svg>
<div class="abs" style="left:601px;top:110px;width:10px;height:24px;border:1px solid #9b9b9b;border-radius:2px;background:linear-gradient(90deg,#f4f4f4,#e2e2e2 60%,#cfcfcf)"></div>
<div class="abs" style="left:604px;top:119px;width:4px;height:5px;background:repeating-linear-gradient(180deg,#666 0 1px,transparent 1px 2px)"></div>
<svg class="abs" style="left:603.5px;top:610px" width="5" height="3" viewBox="0 0 5 3"><path d="M0 0H4.6L2.3 2.6Z" fill="#555"/></svg>

<!-- RIGHT PANEL -->
<div class="abs" style="left:635px;top:19px;width:626px;height:2px;background:#eceef1"></div>
<div class="t" style="left:640.50px;top:4.78px;font:normal normal 9.2px/1 'Liberation Sans';color:#3c4c66;transform:scaleX(0.7414);">SQLITE VIEWER</div>
<svg class="abs" style="left:1221.0px;top:8.0px" width="6" height="4" viewBox="0 0 6 4"><path d="M0 0H5.4L2.7 3.1Z" fill="#111"/></svg>
<svg class="abs" style="left:1232px;top:6px" width="7" height="9" viewBox="0 0 7 9"><rect x="0.9" y="1" width="4.1" height="4.6" fill="#111"/><rect x="2" y="2.1" width="1.2" height="2.7" fill="#fff"/><rect x="0.5" y="5.1" width="5.2" height="1" fill="#111"/><rect x="2.3" y="6" width="1.4" height="1.7" fill="#888"/></svg>
<svg class="abs" style="left:1245.8px;top:6.1px" width="7" height="7" viewBox="0 0 7 7"><path d="M0.7 0.7L6.3 6.3M6.3 0.7L0.7 6.3" stroke="#111" stroke-width="1.3"/></svg>
<div class="tabline" style="left:635px;width:78px"></div>
<div class="tab" style="left:712px;width:138px"></div>
<div class="tabline" style="left:849px;width:412px"></div>
<div class="t" style="left:650.00px;top:39.69px;font:normal normal 8.6px/1 'Liberation Sans';color:#333;transform:scaleX(0.8151);">STRUCTURE</div>
<div class="t" style="left:720.00px;top:39.89px;font:normal normal 8.6px/1 'Liberation Sans';color:#333;transform:scaleX(0.9386);">fwmultik_dispatcher_global_vs</div>
<svg class="abs" style="left:837.6px;top:40.5px" width="7" height="7" viewBox="0 0 7 7"><path d="M0.7 0.7L6.3 6.3M6.3 0.7L0.7 6.3" stroke="#1a1a1a" stroke-width="1.3"/></svg>
<svg class="abs" style="left:857.15px;top:41.95px" width="4.5" height="4.5" viewBox="0 0 4.5 4.5"><path d="M2.25 0V4.5M0 2.25H4.5" stroke="#2a2a2a" stroke-width="1"/></svg>
<svg class="abs" style="left:1250px;top:40px" width="6" height="6" viewBox="0 0 6 6"><rect x="0.25" y="0" width="5.25" height="1.7" fill="#1a1a1a"/><path d="M0.1 2.9H5.6L2.85 5.8Z" fill="#111"/></svg>
<div class="abs" style="left:650px;top:62px;width:124px;height:18px;background:#e8e9eb;border:1px solid #dcdee1"></div>
<div class="t" style="left:654.70px;top:66.79px;font:normal normal 8.6px/1 'Liberation Sans';color:#333;transform:scaleX(0.8794);">bluebird_6_11_2018_14_54.(</div>
<svg class="abs" style="left:764.0px;top:69.0px" width="6" height="4" viewBox="0 0 6 4"><path d="M0 0H5.4L2.7 3.1Z" fill="#111"/></svg>
<div class="abs" style="left:780px;top:63px;width:1px;height:13px;background:#e6e8eb"></div>
<div class="abs" style="left:792px;top:67.6px;width:0;height:0;border-left:5.5px solid #1c2b4a;border-top:3.25px solid transparent;border-bottom:3.25px solid transparent"></div>
<div class="t" style="left:803.10px;top:66.69px;font:normal normal 8.6px/1 'Liberation Sans';color:#333;transform:scaleX(0.8628);">Execute</div>
<div class="abs" style="left:840px;top:63px;width:1px;height:13px;background:#e6e8eb"></div>
<svg class="abs" style="left:848px;top:64px" width="16" height="12" viewBox="0 0 16 12"><path d="M5.6 5.1A2.5 2.5 0 1 0 8.1 7.6" fill="none" stroke="#1c2b4a" stroke-width="1.4"/><path d="M6.2 6.5L10.6 5.5" stroke="#1c2b4a" stroke-width="1.4"/><path d="M10.4 3.3L13.2 5.5L10.4 7.7Z" fill="#1c2b4a"/></svg>
<div class="t" style="left:864.20px;top:66.69px;font:normal normal 8.6px/1 'Liberation Sans';color:#333;transform:scaleX(0.8775);">Export</div>
<div class="abs" style="left:897px;top:63px;width:1px;height:13px;background:#e6e8eb"></div>
<div class="abs" style="left:650px;top:83px;width:596px;height:1px;background:#e8eaed"></div>
<div class="abs" style="left:650px;top:94px;width:596px;height:162px;border-top:2px solid #7a7a7a;border-left:1px solid #6a6a6a;border-right:1px solid #dedede;border-bottom:1px solid #dedede;background:#fff"></div>
<div class="abs" style="left:651px;top:96px;width:24px;height:148px;background:#e4e4e4"></div>
<div class="t" style="left:657.40px;top:98.38px;font:normal normal 8.96px/1 'Liberation Mono';color:#a89880;">1</div>
<div class="t" style="left:675.40px;top:98.38px;font:normal normal 8.96px/1 'Liberation Mono';color:#1a1a1a;-webkit-text-stroke-width:0"><span style="color:#2222ff;-webkit-text-stroke:0.3px #2222ff">SELECT</span> * <span style="color:#2222ff;-webkit-text-stroke:0.3px #2222ff">FROM</span> fwmultik_dispatcher_global_vs <span style="color:#2222ff;-webkit-text-stroke:0.3px #2222ff">LIMIT</span> <span style="color:#b04a30">100</span></div>
<div class="abs" style="left:651px;top:244px;width:594px;height:11px;background:#ececec"></div>
<svg class="abs" style="left:653.7px;top:247px" width="4" height="5" viewBox="0 0 4 5"><path d="M3.6 0.4V4.2L0.4 2.3Z" fill="#333"/></svg>
<div class="abs" style="left:663px;top:244.5px;width:241px;height:10px;border:1px solid #a6a6a6;border-radius:2px;background:linear-gradient(180deg,#f6f6f6,#dcdcdc 55%,#c8c8c8)"></div>
<div class="abs" style="left:781px;top:247px;width:5px;height:4px;background:repeating-linear-gradient(90deg,#555 0 1px,transparent 1px 2px)"></div>
<svg class="abs" style="left:1237.5px;top:247.5px" width="4" height="5" viewBox="0 0 4 5"><path d="M0.4 0.4V4.2L3.6 2.3Z" fill="#333"/></svg>
<div class="t" style="left:649.80px;top:271.15px;font:normal normal 11px/1 'Liberation Sans';color:#3d4e67;transform:scaleX(1.0767);-webkit-text-stroke-width:0.05px">Query Results: 100 rows returned, took 0 ms</div>
<div class="abs" style="left:650px;top:289px;width:596px;height:16px;background:#2e3f59;border-top:1px solid #24334d;border-bottom:1px solid #24334d"></div>
<div class="abs" style="left:707px;top:289px;width:1px;height:16px;background:#3d4e68"></div>
<div class="abs" style="left:785px;top:289px;width:1px;height:16px;background:#3d4e68"></div>
<div class="t" style="left:654.80px;top:294.23px;font:normal bold 8.2px/1 'Liberation Sans';color:#fff;transform:scaleX(0.9657);">Timestamp</div>
<div class="t" style="left:712.20px;top:294.23px;font:normal bold 8.2px/1 'Liberation Sans';color:#fff;transform:scaleX(0.9737);">multik_forwarding</div>
<div class="abs" style="left:650px;top:305px;width:1px;height:315px;background:#e2e4e8"></div>
<div class="abs" style="left:650px;top:619px;width:596px;height:1px;background:#e2e4e8"></div>
<div class="abs" style="left:1234px;top:305px;width:12px;height:315px;background:#ebebeb"></div>
<svg class="abs" style="left:1237px;top:308.5px" width="6" height="4" viewBox="0 0 6 4"><path d="M0.8 3L4.6 0.6L5.2 3Z" fill="#555"/></svg>
<div class="abs" style="left:1235px;top:316px;width:10px;height:55px;border:1px solid #9b9b9b;border-radius:2px;background:linear-gradient(90deg,#f4f4f4,#e2e2e2 60%,#cfcfcf)"></div>
<div class="abs" style="left:1238px;top:341px;width:4px;height:5px;background:repeating-linear-gradient(180deg,#666 0 1px,transparent 1px 2px)"></div>
<svg class="abs" style="left:1237.5px;top:612px" width="5" height="3" viewBox="0 0 5 3"><path d="M0 0H4.6L2.3 2.6Z" fill="#555"/></svg>

<!-- CALLOUT -->
<svg class="abs" style="left:0;top:0" width="1267" height="640" viewBox="0 0 1267 640">
<path d="M408 537.5L208.5 405L442 537.5" fill="none" stroke="#555" stroke-width="0.9"/>
<rect x="384.5" y="537.5" width="140" height="53" rx="8" ry="8" fill="#fff" stroke="#666" stroke-width="1"/>
<path d="M525 558.5H622.5V552.5L634.5 563.5L622.5 574.5V568.5H525Z" fill="#a4a6a9"/>
</svg>
<div class="t" style="left:404.40px;top:538.77px;font:normal normal 14.5px/1 'Liberation Sans';color:#4d4d4d;-webkit-text-stroke-width:0">Double click on</div>
<div class="t" style="left:400.20px;top:555.88px;font:normal normal 14.5px/1 'Liberation Sans';color:#4d4d4d;transform:scaleX(1.0078);-webkit-text-stroke-width:0">table/view name</div>
<div class="t" style="left:391.40px;top:572.97px;font:normal normal 14.5px/1 'Liberation Sans';color:#4d4d4d;transform:scaleX(1.0056);-webkit-text-stroke-width:0">displays its content</div>
</body></html>
